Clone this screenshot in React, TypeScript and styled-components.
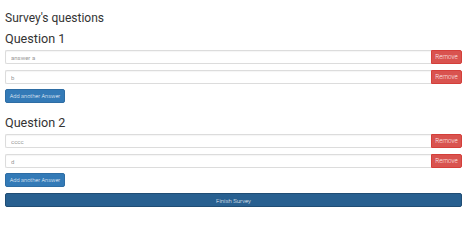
import React from "react";
import styled, { createGlobalStyle } from "styled-components";

const GlobalStyle = createGlobalStyle`
  html, body {
    margin: 0;
    padding: 0;
    background: #ffffff;
    font-family: Roboto, "Liberation Sans", Arial, sans-serif;
    color: #333333;
  }
`;

const Page = styled.div`
  padding: 0 12px 0 5px;
  display: flex;
  flex-direction: column;
`;

const Title = styled.h2`
  margin: 11px 0 0;
  font-size: 12px;
  font-weight: 400;
  line-height: 14px;
  color: #333;
`;

const QuestionBlock = styled.div`
  display: flex;
  flex-direction: column;
`;

const QuestionTitle = styled.h3<{ $top: number }>`
  margin: ${(p) => p.$top}px 0 0;
  font-size: 12.6px;
  font-weight: 400;
  line-height: 15px;
  color: #333;
`;

const AnswerRow = styled.div`
  display: flex;
  height: 14px;
  margin-top: 6px;
  &:first-of-type {
    margin-top: 4px;
  }
`;

const AnswerInput = styled.input`
  flex: 1;
  min-width: 0;
  height: 14px;
  box-sizing: border-box;
  border: 1px solid #dcdcdc;
  border-right: none;
  border-radius: 2px 0 0 2px;
  padding: 0 5px;
  font-family: inherit;
  font-size: 6px;
  color: #999;
  outline: none;
  box-shadow: inset 0 1px 1px rgba(0, 0, 0, 0.04);
`;

const RemoveButton = styled.button`
  width: 31px;
  height: 14px;
  box-sizing: border-box;
  border: 1px solid #d43f3a;
  border-radius: 0 2px 2px 0;
  background: #d9534f;
  color: #fdeeee;
  font-family: inherit;
  font-size: 6.3px;
  font-weight: 300;
  padding: 0;
`;

const AddButton = styled.button`
  align-self: flex-start;
  margin-top: 5px;
  width: 60px;
  height: 14px;
  box-sizing: border-box;
  border: 1px solid #2e6da4;
  border-radius: 2px;
  background: #337ab7;
  color: #f0f5fa;
  font-family: inherit;
  font-size: 5.7px;
  font-weight: 300;
  padding: 0;
`;

const FinishButton = styled.button`
  margin-top: 6px;
  height: 14px;
  box-sizing: border-box;
  border: 1px solid #204d74;
  border-radius: 2px;
  background: #286090;
  color: #f0f5fa;
  font-family: inherit;
  font-size: 6px;
  font-weight: 300;
  padding: 0;
`;

const questions = [
  { title: "Question 1", answers: ["answer a", "b"], top: 6 },
  { title: "Question 2", answers: ["cccc", "d"], top: 12 },
];

export default function App() {
  return (
    <>
      <GlobalStyle />
      <Page>
        <Title>Survey's questions</Title>
        {questions.map((q) => (
          <QuestionBlock key={q.title}>
            <QuestionTitle $top={q.top}>{q.title}</QuestionTitle>
            {q.answers.map((a, i) => (
              <AnswerRow key={i}>
                <AnswerInput defaultValue={a} />
                <RemoveButton>Remove</RemoveButton>
              </AnswerRow>
            ))}
            <AddButton>Add another Answer</AddButton>
          </QuestionBlock>
        ))}
        <FinishButton>Finish Survey</FinishButton>
      </Page>
    </>
  );
}
